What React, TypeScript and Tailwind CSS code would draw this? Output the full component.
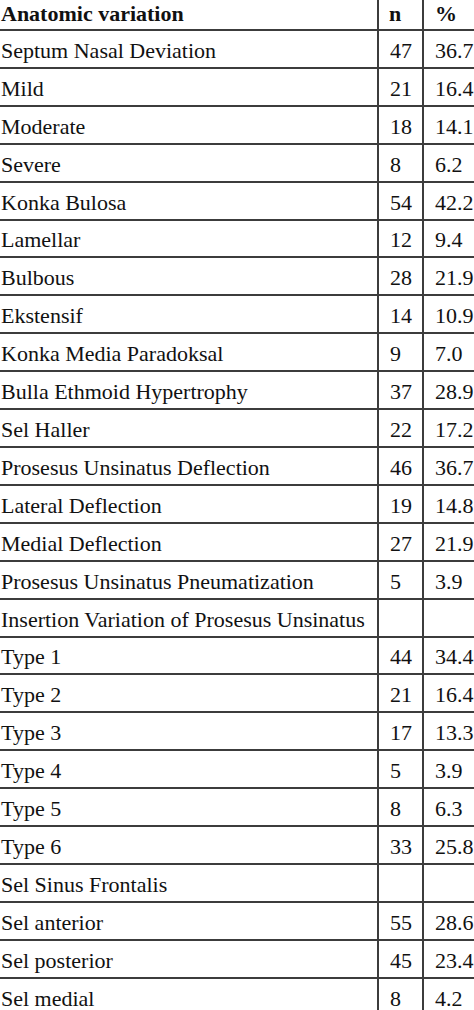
import React from 'react';

type Row = { label: string; n?: string; pct?: string };

const rows: Row[] = [
    { label: 'Septum Nasal Deviation', n: '47', pct: '36.7' },
    { label: 'Mild', n: '21', pct: '16.4' },
    { label: 'Moderate', n: '18', pct: '14.1' },
    { label: 'Severe', n: '8', pct: '6.2' },
    { label: 'Konka Bulosa', n: '54', pct: '42.2' },
    { label: 'Lamellar', n: '12', pct: '9.4' },
    { label: 'Bulbous', n: '28', pct: '21.9' },
    { label: 'Ekstensif', n: '14', pct: '10.9' },
    { label: 'Konka Media Paradoksal', n: '9', pct: '7.0' },
    { label: 'Bulla Ethmoid Hypertrophy', n: '37', pct: '28.9' },
    { label: 'Sel Haller', n: '22', pct: '17.2' },
    { label: 'Prosesus Unsinatus Deflection', n: '46', pct: '36.7' },
    { label: 'Lateral Deflection', n: '19', pct: '14.8' },
    { label: 'Medial Deflection', n: '27', pct: '21.9' },
    { label: 'Prosesus Unsinatus Pneumatization', n: '5', pct: '3.9' },
    { label: 'Insertion Variation of Prosesus Unsinatus' },
    { label: 'Type 1', n: '44', pct: '34.4' },
    { label: 'Type 2', n: '21', pct: '16.4' },
    { label: 'Type 3', n: '17', pct: '13.3' },
    { label: 'Type 4', n: '5', pct: '3.9' },
    { label: 'Type 5', n: '8', pct: '6.3' },
    { label: 'Type 6', n: '33', pct: '25.8' },
    { label: 'Sel Sinus Frontalis' },
    { label: 'Sel anterior', n: '55', pct: '28.6' },
    { label: 'Sel posterior', n: '45', pct: '23.4' },
    { label: 'Sel medial', n: '8', pct: '4.2' },
];

export default function App() {
    return (
        <div className="w-[474px] h-[1010px] overflow-hidden bg-white text-[#111] font-['Liberation_Serif',serif] text-[22px] leading-none">
            <div className="w-[520px]">
                {/* header */}
                <div className="grid grid-cols-[379px_45px_96px] h-[31px] border-b-2 border-[#3c3c3c] font-bold">
                    <div className="flex items-center pl-[1px] pb-[1px] border-r-2 border-[#3c3c3c]">Anatomic variation</div>
                    <div className="flex items-center pl-[10px] pb-[1px] border-r-2 border-[#3c3c3c]">n</div>
                    <div className="flex items-center pl-[11px] pb-[1px]">%</div>
                </div>
                {rows.map((r) => (
                    <div key={r.label} className="grid grid-cols-[379px_45px_96px] h-[37.92px] border-b-2 border-[#3c3c3c]">
                        <div className="flex items-center pl-[1px] pt-[4px] border-r-2 border-[#3c3c3c] whitespace-nowrap">{r.label}</div>
                        <div className="flex items-center pl-[11px] pt-[4px] border-r-2 border-[#3c3c3c]">{r.n}</div>
                        <div className="flex items-center pl-[11px] pt-[4px] whitespace-nowrap">{r.pct}</div>
                    </div>
                ))}
            </div>
        </div>
    );
}
